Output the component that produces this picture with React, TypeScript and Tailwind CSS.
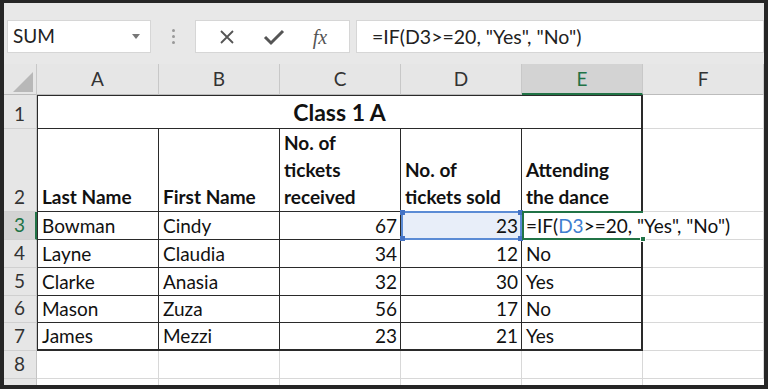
import React from 'react';

const FONT = 'font-["Lato","Liberation_Sans",sans-serif]';

type Row = {
  n: number;
  last: string;
  first: string;
  received: number;
  sold: number;
  attending: string;
};

const rows: Row[] = [
  { n: 4, last: 'Layne', first: 'Claudia', received: 34, sold: 12, attending: 'No' },
  { n: 5, last: 'Clarke', first: 'Anasia', received: 32, sold: 30, attending: 'Yes' },
  { n: 6, last: 'Mason', first: 'Zuza', received: 56, sold: 17, attending: 'No' },
  { n: 7, last: 'James', first: 'Mezzi', received: 23, sold: 21, attending: 'Yes' },
];

function RowHead({ n, active, h }: { n: number | string; active?: boolean; h: string }) {
  return (
    <div
      className={`${h} flex items-end pb-[3px] pl-[10px] text-[19px] leading-[22px] ${
        active
          ? 'bg-[#d3d3d3] text-[#217346] border-r-2 border-r-[#217346]'
          : 'bg-[#e6e6e6] text-[#333] border-r border-r-[#c4c4c4]'
      } border-b border-b-[#d0d0d0]`}
    >
      {n}
    </div>
  );
}

function Toolbar() {
  return (
    <div className="h-[61px] shrink-0 bg-[#e8e8e8] flex items-start pt-[17px] pl-[3px] gap-0">
      {/* name box */}
      <div className="w-[144px] h-[33px] bg-white border border-[#d6d6d6] flex items-center justify-between pl-[5px] pr-[10px]">
        <span className="text-[19px] text-[#222]">SUM</span>
        <svg width="8" height="5" viewBox="0 0 8 5">
          <path d="M0 0 L8 0 L4 5 Z" fill="#777" />
        </svg>
      </div>
      {/* dots */}
      <div className="w-[44px] h-[33px] flex flex-col items-center justify-center gap-[3px]">
        <span className="w-[3px] h-[3px] rounded-full bg-[#999]" />
        <span className="w-[3px] h-[3px] rounded-full bg-[#999]" />
        <span className="w-[3px] h-[3px] rounded-full bg-[#999]" />
      </div>
      {/* cancel / enter / fx */}
      <div className="w-[155px] h-[33px] bg-white border border-[#d6d6d6] flex items-center justify-around px-[8px]">
        <svg width="18" height="18" viewBox="0 0 18 18">
          <path d="M3 3 L15 15 M15 3 L3 15" stroke="#555" strokeWidth="1.8" />
        </svg>
        <svg width="22" height="18" viewBox="0 0 22 18">
          <path d="M2 9 L8 15 L20 3" stroke="#555" strokeWidth="3" fill="none" />
        </svg>
        <span className='font-["Liberation_Serif",serif] italic text-[20px] text-[#555]'>fx</span>
      </div>
      {/* formula */}
      <div className="flex-1 ml-[6px] h-[33px] bg-white border border-[#d6d6d6] flex items-center pl-[15px]">
        <span className="text-[19.5px] text-[#222] whitespace-pre">=IF(D3&gt;=20, "Yes", "No")</span>
      </div>
    </div>
  );
}

export default function App() {
  const dark = 'border-[#2a2a2a]';
  const grid = 'border-r border-b border-[#d8d8d8]';
  const colHead = 'bg-[#e6e6e6] border-r border-r-[#c8c8c8] border-b border-b-[#bcbcbc] flex items-center justify-center text-[19px] text-[#333]';

  return (
    <div
      className={`${FONT} w-[768px] h-[389px] overflow-hidden bg-white border-t-[3px] border-x-[4px] border-b-[4px] border-[#262626] flex flex-col`}
    >
      <Toolbar />
      <div className="grid shrink-0 grid-cols-[33px_122px_121px_121px_121px_121px_1fr] text-[19px] leading-[22px] text-[#111]">
        {/* column headers */}
        <div className="h-[31px] bg-[#e6e6e6] border-r border-r-[#c8c8c8] border-b border-b-[#bcbcbc] flex items-end justify-end pr-[3px] pb-[2px]">
          <svg width="20" height="20" viewBox="0 0 20 20">
            <path d="M20 0 L20 20 L0 20 Z" fill="#b8b8b8" />
          </svg>
        </div>
        <div className={colHead}>A</div>
        <div className={colHead}>B</div>
        <div className={colHead}>C</div>
        <div className={colHead}>D</div>
        <div className="bg-[#d3d3d3] border-r border-r-[#c8c8c8] border-b-2 border-b-[#217346] flex items-center justify-center text-[19px] text-[#217346]">
          E
        </div>
        <div className={colHead}>F</div>

        {/* row 1 */}
        <RowHead n={1} h="h-[34px]" />
        <div className={`col-span-5 border-t border-l border-r-2 border-b ${dark} flex items-center justify-center font-bold text-[23px]`}>
          Class 1 A
        </div>
        <div className={grid} />

        {/* row 2 */}
        <RowHead n={2} h="h-[83px]" />
        <div className={`border-l border-r border-b ${dark} flex items-end pl-[4px] pb-[1px] font-bold leading-[27px]`}>Last Name</div>
        <div className={`border-r border-b ${dark} flex items-end pl-[4px] pb-[1px] font-bold leading-[27px]`}>First Name</div>
        <div className={`border-r border-b ${dark} flex items-end pl-[4px] pb-[1px] font-bold leading-[27px]`}>
          No. of
          <br />
          tickets
          <br />
          received
        </div>
        <div className={`border-r border-b ${dark} flex items-end pl-[4px] pb-[1px] font-bold leading-[27px]`}>
          No. of
          <br />
          tickets sold
        </div>
        <div className={`border-r-2 border-b ${dark} flex items-end pl-[4px] pb-[1px] font-bold leading-[27px]`}>
          Attending
          <br />
          the dance
        </div>
        <div className={grid} />

        {/* row 3 (active) */}
        <RowHead n={3} active h="h-[28px]" />
        <div className={`border-l border-r border-b ${dark} flex items-center pl-[4px]`}>Bowman</div>
        <div className={`border-r border-b ${dark} flex items-center pl-[4px]`}>Cindy</div>
        <div className={`border-r border-b ${dark} flex items-center justify-end pr-[3px]`}>67</div>
        <div className="relative bg-[#e8eef9] border-2 border-[#5b8bd5] -mt-[1px] flex items-center justify-end pr-[2px]">
          23
          <span className="absolute -left-[3px] -top-[3px] w-[5px] h-[5px] bg-[#4472c4]" />
          <span className="absolute -right-[3px] -top-[3px] w-[5px] h-[5px] bg-[#4472c4]" />
          <span className="absolute -left-[3px] -bottom-[3px] w-[5px] h-[5px] bg-[#4472c4]" />
          <span className="absolute -right-[3px] -bottom-[3px] w-[5px] h-[5px] bg-[#4472c4]" />
        </div>
        <div className="relative z-10 border-y-2 border-l-2 border-[#217346] -mt-[1px] flex items-center pl-[2px] whitespace-pre overflow-visible">
          <span>
            =IF(<span className="text-[#3f7fd0]">D3</span>&gt;=20, "Yes", "No")
          </span>
          <span className="inline-block w-[1px] h-[22px] bg-[#222] ml-[2px]" />
          <span className="absolute -right-[3px] -bottom-[4px] w-[6px] h-[6px] bg-[#217346] border border-white" />
        </div>
        <div className="border-b border-[#d8d8d8] border-r" />

        {/* rows 4-7 */}
        {rows.map((r) => {
          const last = r.n === 7;
          const b = last ? 'border-b-2' : 'border-b';
          return (
            <React.Fragment key={r.n}>
              <RowHead n={r.n} h={r.n === 6 ? 'h-[27px]' : 'h-[28px]'} />
              <div className={`border-l border-r ${b} ${dark} flex items-center pl-[4px]`}>{r.last}</div>
              <div className={`border-r ${b} ${dark} flex items-center pl-[4px]`}>{r.first}</div>
              <div className={`border-r ${b} ${dark} flex items-center justify-end pr-[3px]`}>{r.received}</div>
              <div className={`border-r ${b} ${dark} flex items-center justify-end pr-[3px]`}>{r.sold}</div>
              <div className={`border-r-2 ${b} ${dark} flex items-center pl-[4px]`}>{r.attending}</div>
              <div className={grid} />
            </React.Fragment>
          );
        })}

        {/* row 8 */}
        <RowHead n={8} h="h-[28px]" />
        <div className={grid} />
        <div className={grid} />
        <div className={grid} />
        <div className={grid} />
        <div className={grid} />
        <div className={grid} />

        {/* row 9 partial */}
        <div className="h-[10px] bg-[#e6e6e6] border-r border-r-[#c4c4c4]" />
        <div className="border-r border-[#d8d8d8]" />
        <div className="border-r border-[#d8d8d8]" />
        <div className="border-r border-[#d8d8d8]" />
        <div className="border-r border-[#d8d8d8]" />
        <div className="border-r border-[#d8d8d8]" />
        <div />
      </div>
    </div>
  );
}
